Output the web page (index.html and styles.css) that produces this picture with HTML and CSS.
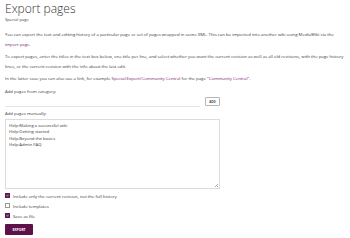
FILE: index.html
```html
<!DOCTYPE html>
<html lang="en">
<head>
<meta charset="UTF-8">
<meta name="viewport" content="width=device-width, initial-scale=1.0">
<title>Export pages</title>
<link rel="stylesheet" href="styles.css">
</head>
<body>

<div class="page">
    <h1>Export pages</h1>
    <div class="subtitle">Special page</div>

    <p>You can export the text and editing history of a particular page or set of pages wrapped in some XML. This can be imported into another wiki using MediaWiki via the <a href="#">import page</a>.</p>
    <p>To export pages, enter the titles in the text box below, one title per line, and select whether you want the current revision as well as all old revisions, with the page history lines, or the current revision with the info about the last edit.</p>
    <p>In the latter case you can also use a link, for example <a href="#">Special:Export/Community Central</a> for the page "<a href="#">Community Central</a>".</p>

    <form class="export-form">
        <label class="field-label">Add pages from category:</label>
        <div class="category-row">
            <input type="text" class="category-input">
            <button type="button" class="btn-add">ADD</button>
        </div>

        <label class="field-label">Add pages manually:</label>
        <!-- caja de paginas -->
        <div class="pages" role="textbox" aria-multiline="true">
            <div>Help:Making a successful wiki</div>
            <div>Help:Getting started</div>
            <div>Help:Beyond the basics</div>
            <div>Help:Admin FAQ</div>
        </div>

        <div class="check-row first"><span class="check on"><svg viewBox="0 0 10 10"><path d="M2 5.2 L4.2 7.3 L8 2.8" fill="none" stroke="#fff" stroke-width="1.6"/></svg></span>Include only the current revision, not the full history</div>
        <div class="check-row"><span class="check"></span>Include templates</div>
        <div class="check-row"><span class="check on"><svg viewBox="0 0 10 10"><path d="M2 5.2 L4.2 7.3 L8 2.8" fill="none" stroke="#fff" stroke-width="1.6"/></svg></span>Save as file</div>

        <button type="submit" class="btn-export">EXPORT</button>
    </form>
</div>

</body>
</html>
```

FILE: styles.css
```css
body {
    margin: 0;
    padding: 0;
    background-color: #fff;
    font-family: "Open Sans", "Liberation Sans", sans-serif;
    color: #3a3a3a;
}

.page {
    padding: 1px 5px 0 5px;
    font-size: 4.3px;
}

h1 {
    font-family: "Open Sans", sans-serif;
    font-weight: 300;
    font-size: 12px;
    line-height: 16px;
    margin: 0;
    color: #333;
}

.subtitle {
    font-size: 4.1px;
    line-height: 5px;
    margin-bottom: 8px;
}

p {
    margin: 0 0 3px 0;
    line-height: 9.5px;
}

a {
    color: #7d2275;
    text-decoration: none;
}

.field-label {
    display: block;
    line-height: 9px;
    margin-top: 1px;
}

.category-row {
    display: flex;
    align-items: center;
    width: 215px;
    height: 12px;
    margin-bottom: 1px;
}

.category-input {
    flex: 1;
    height: 10px;
    border: none;
    border-bottom: 1px solid #e4e4e4;
    padding: 0;
    margin-right: 5px;
}

.btn-add {
    width: 15px;
    height: 9px;
    padding: 0;
    border: 1px solid #b5b5b5;
    border-radius: 1px;
    background-color: #fff;
    font-family: inherit;
    font-size: 3px;
    font-weight: bold;
    color: #444;
}

.pages {
    position: relative;
    box-sizing: border-box;
    width: 215px;
    height: 70px;
    margin-top: 1px;
    padding: 2px 3px;
    border: 1px solid #dcdcdc;
    font-size: 4.25px;
    line-height: 6.6px;
    color: #3a3a3a;
}

/* agarre de redimension */
.pages::after {
    content: "";
    position: absolute;
    right: 1px;
    bottom: 1px;
    width: 3px;
    height: 3px;
    background: linear-gradient(135deg, transparent 45%, #aaa 45%, #aaa 60%, transparent 60%, transparent 75%, #aaa 75%);
}

.check-row {
    display: flex;
    align-items: center;
    height: 10px;
}

.check-row.first {
    margin-top: 2px;
}

.check {
    box-sizing: border-box;
    display: flex;
    width: 5px;
    height: 5px;
    margin-right: 3px;
    border: 0.6px solid #999;
    background-color: #fff;
}

.check.on {
    background-color: #6b2560;
    border-color: #5a1a50;
}

.check svg {
    width: 100%;
    height: 100%;
}

.btn-export {
    display: block;
    margin-top: 3px;
    width: 28px;
    height: 11px;
    padding: 0;
    border: none;
    border-radius: 1px;
    background-color: #5e1149;
    color: #fff;
    font-family: inherit;
    font-size: 3.4px;
    font-weight: bold;
}
```
